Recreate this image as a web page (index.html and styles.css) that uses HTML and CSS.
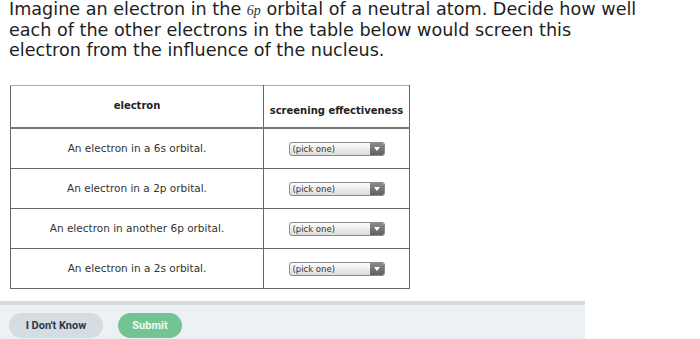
FILE: index.html
```html
<!DOCTYPE html>
<html lang="en">
<head>
    <meta charset="UTF-8">
    <title>Screening effectiveness</title>
    <link rel="stylesheet" href="styles.css">
</head>
<body>
<div class="question">
    <p class="prompt">Imagine an electron in the <span class="math">6p</span> orbital of a neutral atom. Decide how well each of the other electrons in the table below would screen this electron from the influence of the nucleus.</p>

    <table class="grid">
        <tr>
            <th class="colElectron">electron</th>
            <th class="colScreen">screening effectiveness</th>
        </tr>
        <tr>
            <td>An electron in a 6s orbital.</td>
            <td><div class="pick"><span class="pickText">(pick one)</span><span class="pickArrow"></span></div></td>
        </tr>
        <tr>
            <td>An electron in a 2p orbital.</td>
            <td><div class="pick"><span class="pickText">(pick one)</span><span class="pickArrow"></span></div></td>
        </tr>
        <tr>
            <td>An electron in another 6p orbital.</td>
            <td><div class="pick"><span class="pickText">(pick one)</span><span class="pickArrow"></span></div></td>
        </tr>
        <tr>
            <td>An electron in a 2s orbital.</td>
            <td><div class="pick"><span class="pickText">(pick one)</span><span class="pickArrow"></span></div></td>
        </tr>
    </table>
</div>
<div class="footer">
    <a href="javascript:;" class="btn btnGray">I Don't Know</a>
    <a href="javascript:;" class="btn btnGreen">Submit</a>
</div>
</body>
</html>
```

FILE: styles.css
```css
*{margin:0;padding:0;box-sizing:border-box}
a{text-decoration:none}
body{background:#fff;font-family:"DejaVu Sans",Verdana,sans-serif;color:#222;height:339px;overflow:hidden}

.question{padding:0 0 0 9px}
.prompt{width:632px;font-size:17.6px;line-height:20.5px;color:#1e1e1e;margin-top:-1px}
.math{font:italic 14px/1 "Liberation Serif",serif;color:#333}

.grid{margin-top:24px;margin-left:1px;width:400px;border-collapse:collapse;border:1px solid #666;font-size:10.5px;color:#333}
.grid th,.grid td{border:1px solid #666;text-align:center;height:40px;vertical-align:middle}
.grid tr:first-child th{height:43px;border-top-color:#aaa;border-bottom:2px solid #777;font-size:10px;font-weight:bold;color:#222}
.colElectron{width:253px;padding-bottom:2px}
.colScreen{padding-top:8px;white-space:nowrap}

.pick{display:flex;width:96px;height:14px;margin:1px auto 0;border:1px solid #8a8a8a;border-radius:3px;overflow:hidden;
    background:linear-gradient(#fdfdfd,#dcdcdc);text-align:left}
.pickText{flex:1;font-size:8.5px;line-height:12px;padding-left:3px;color:#333}
.pickArrow{width:14px;background:linear-gradient(#8a8a8a,#5e5e5e);position:relative}
.pickArrow:after{content:"";position:absolute;left:4px;top:4px;border-left:3px solid transparent;border-right:3px solid transparent;border-top:4px solid #fff}

.footer{position:absolute;left:0;top:301px;width:585px;height:38px;background:#eef1f3;border-top:4px solid #d5dadd;
    display:flex;gap:15px;padding:8px 0 0 9px}
.btn{display:block;height:25px;border-radius:13px;font:bold 11px/25px Roboto,"Liberation Sans",sans-serif;text-align:center}
.btnGray{width:94px;background:#d6dde2;color:#2b394a}
.btnGreen{width:64px;background:#74c492;color:#eefaf2}
```
